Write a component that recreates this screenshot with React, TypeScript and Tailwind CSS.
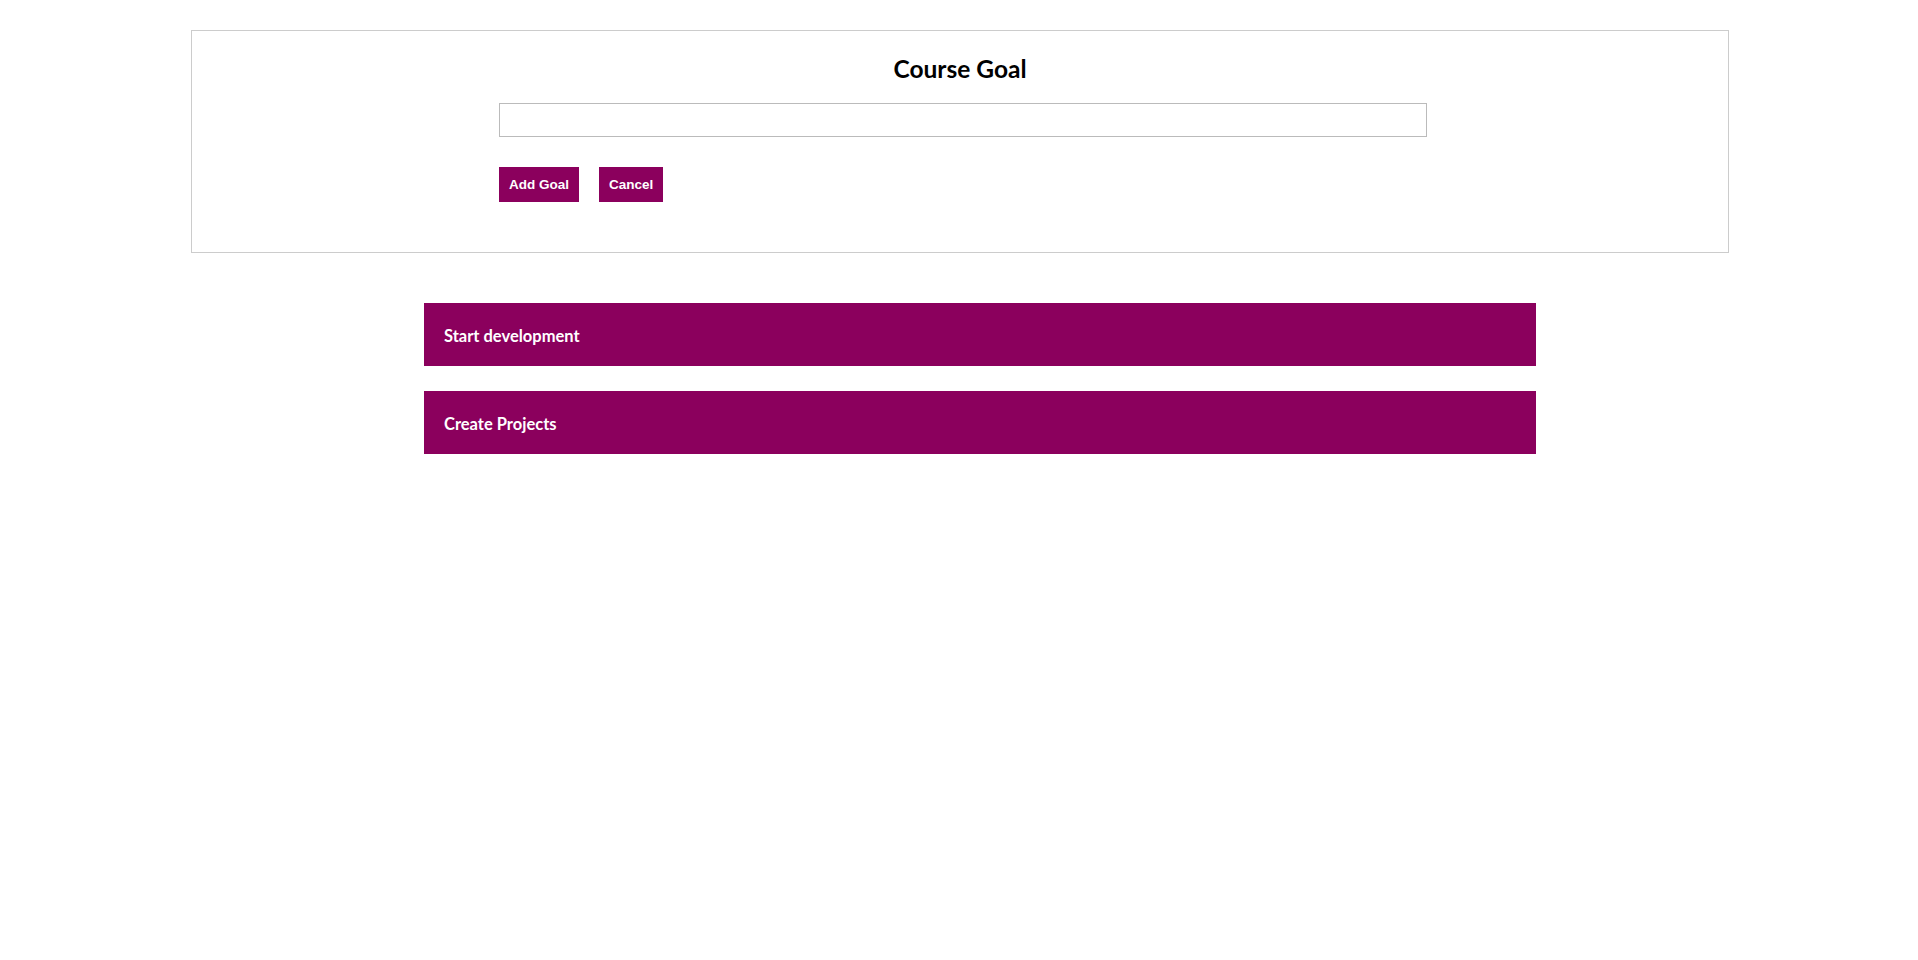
import { useState } from "react";

export default function App() {
  const [goals] = useState([
    { id: "g1", text: "Start development" },
    { id: "g2", text: "Create Projects" },
  ]);

  return (
    <div className="min-h-screen bg-white pt-[30px] font-['Lato',sans-serif]">
      {/* Form card */}
      <section className="ml-[191px] w-[1538px] border border-[#cccccc] pt-[22px] pb-[50px]">
        <h2 className="mb-[18px] text-center text-[24.5px] leading-[32px] font-bold text-black">
          Course Goal
        </h2>
        <div className="ml-[307px] flex w-[928px] flex-col">
          <input
            type="text"
            className="h-[34px] w-full border border-[#bbbbbb] px-2 outline-none"
          />
          <div className="mt-[30px] flex gap-[20px] font-['Liberation_Sans',Arial,sans-serif]">
            <button className="h-[35px] bg-[#8b005d] px-[10px] pt-[2px] text-[13.5px] font-bold text-white">
              Add Goal
            </button>
            <button className="h-[35px] bg-[#8b005d] px-[10px] pt-[2px] text-[13.5px] font-bold text-white">
              Cancel
            </button>
          </div>
        </div>
      </section>

      {/* Goal list */}
      <ul className="mt-[50px] ml-[424px] flex w-[1112px] flex-col gap-[25px]">
        {goals.map((goal) => (
          <li
            key={goal.id}
            className="flex h-[63px] items-center bg-[#8b005d] px-[20px] pt-[3px] text-[16.5px] font-bold text-white"
          >
            {goal.text}
          </li>
        ))}
      </ul>
    </div>
  );
}
